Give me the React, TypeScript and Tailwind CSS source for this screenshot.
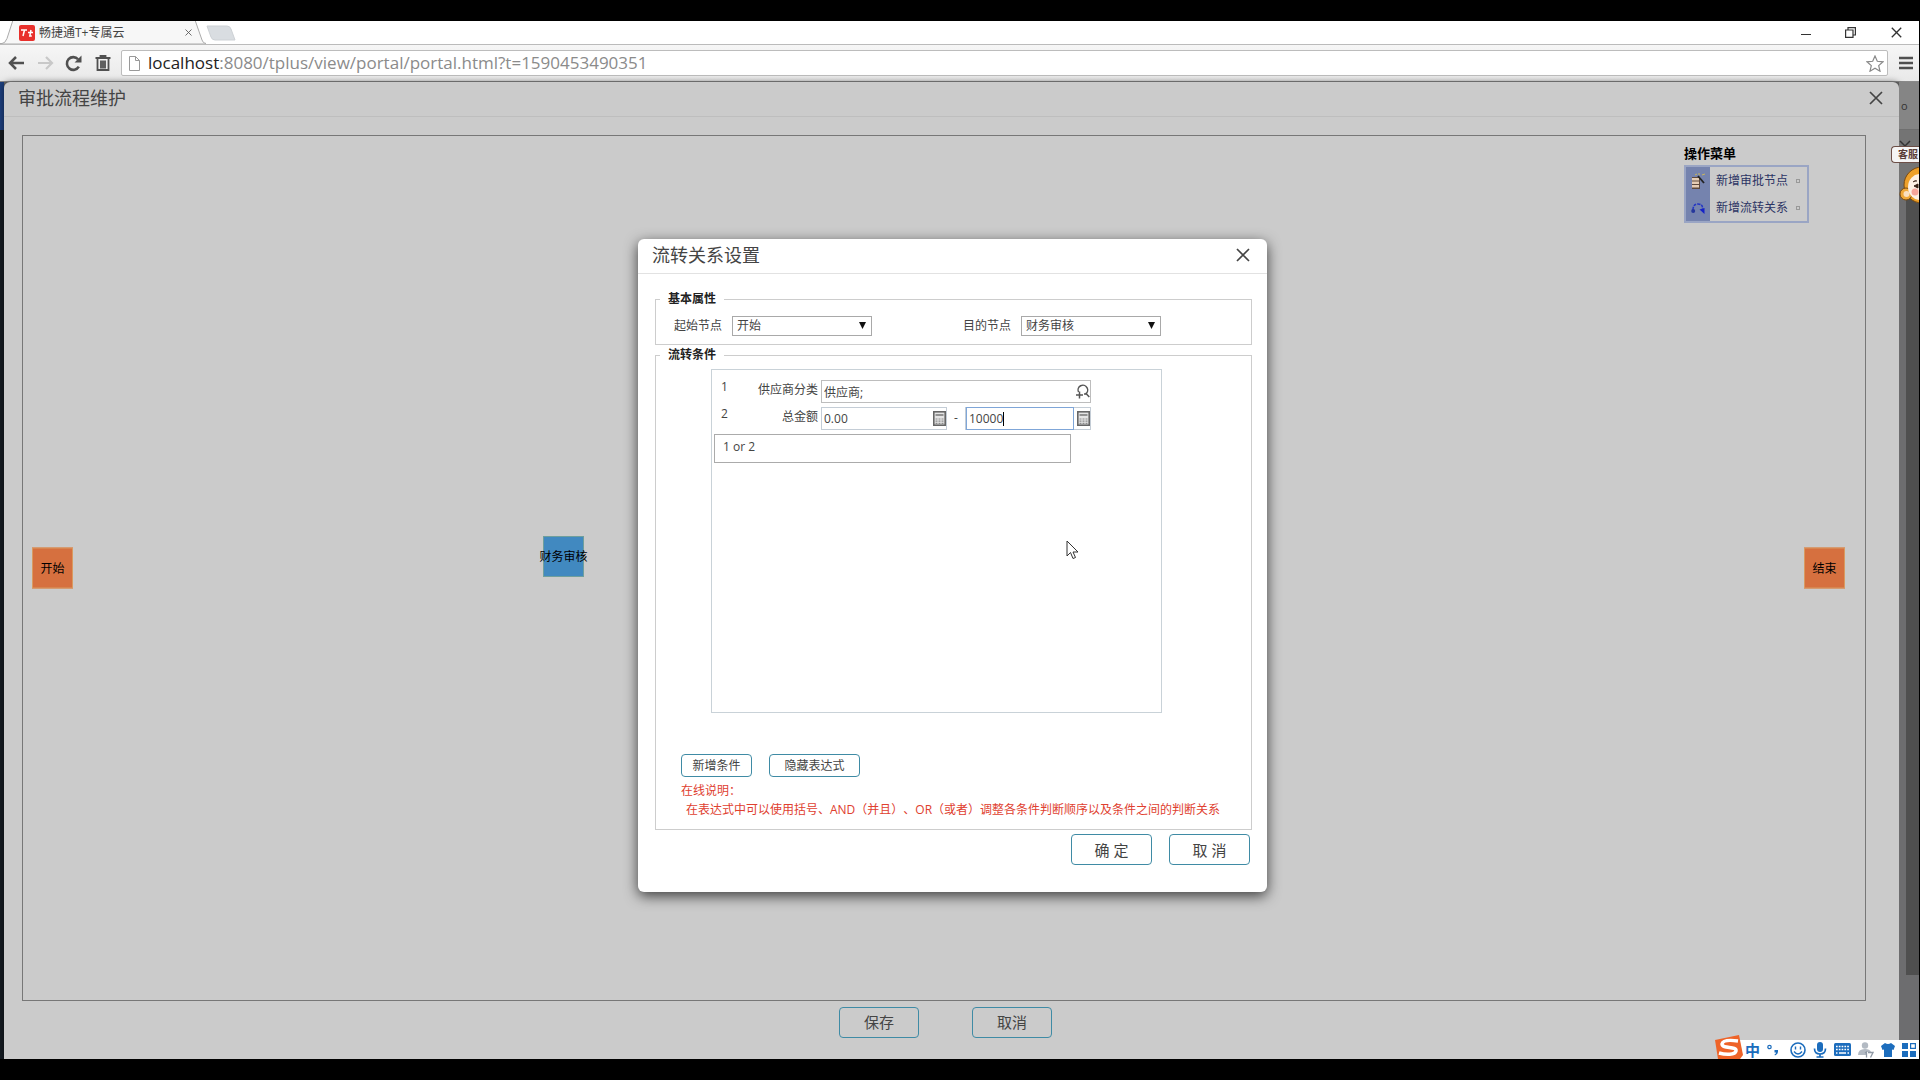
import { useState, type ReactNode } from "react";

const START_OPTIONS = ["开始", "财务审核"];
const TARGET_OPTIONS = ["财务审核", "结束"];

function CloseIcon({ className }: { className: string }) {
  return (
    <svg viewBox="0 0 14 14" className={className} fill="none" stroke="currentColor" aria-hidden="true">
      <path d="M1 1l12 12M13 1L1 13" strokeWidth="1.7" />
    </svg>
  );
}

function CalculatorIcon() {
  return (
    <svg viewBox="0 0 13 15" className="h-[15px] w-[13px]" aria-hidden="true">
      <rect x="0.8" y="0.8" width="11.4" height="13.4" fill="#e4e4e4" stroke="#666" strokeWidth="1.6" />
      <path d="M2.500 4h8" stroke="#777" strokeWidth="1.500" />
      <path d="M2.500 8h8M2.500 10.200h8M2.500 12.400h8" stroke="#8c8c8c" strokeWidth="1.200" strokeDasharray="2 1" />
    </svg>
  );
}

function LookupIcon() {
  return (
    <svg viewBox="0 0 15 15" className="size-[15px]" fill="none" stroke="#555" aria-hidden="true">
      <path d="M3.500 8A4.800 4.800 0 1 1 10.500 10" strokeWidth="1.500" />
      <path d="M4.500 7.500v7M1 11h7M9 10h2.500l2.800 3" strokeWidth="1.500" />
    </svg>
  );
}

function BrowserHeader() {
  return (
    <header className="bg-white font-['Open_Sans','Noto_Sans_CJK_SC',sans-serif]">
      <div className="flex h-[23px] items-stretch justify-between">
        <div className="flex">
          <div className="relative flex w-[206px] items-center">
            <svg viewBox="0 0 206 23" className="absolute inset-0 h-[23px] w-[206px]" aria-hidden="true">
              <path d="M0 22.5h2q3 0 5-5L13-1H195l7 20q1 3.500 4 3.500V23H0z" fill="#f7f7f7" stroke="#aaa" />
            </svg>
            <div className="relative flex w-full items-center pl-[19px]">
              <svg viewBox="0 0 16 16" className="size-4" aria-hidden="true">
                <rect width="16" height="16" rx="2" fill="#e8302c" />
                <path d="M2 5h6M5.500 5l-1.500 6M9 7.500h5M12 5l-1.200 6h2" stroke="#fff" strokeWidth="1.500" fill="none" />
              </svg>
              <span className="ml-1 grow text-xs text-[#444]">畅捷通T+专属云</span>
              <button type="button" aria-label="关闭标签页" className="mr-[14px] text-[#555]">
                <CloseIcon className="size-[7px]" />
              </button>
            </div>
          </div>
          <svg viewBox="0 0 34 23" className="h-[23px] w-[34px]" aria-hidden="true">
            <path d="M1 5h20q3 0 4 3l4 11H9q-3 0-4-3z" fill="#d9dde1" stroke="#cdd1d5" />
          </svg>
        </div>
        <div className="flex items-center gap-8 pr-[17px] text-[#333]">
          <button type="button" aria-label="最小化" className="pr-[2px]">
            <svg viewBox="0 0 10 10" className="size-[10px]">
              <path d="M0 6.500h10" stroke="currentColor" />
            </svg>
          </button>
          <button type="button" aria-label="还原">
            <svg viewBox="0 0 11 11" className="size-[11px]" fill="none" stroke="currentColor" strokeWidth="1.200">
              <path d="M0.600 3h7.400v7.400H0.600zM3 3V0.600h7.400V8H8" />
            </svg>
          </button>
          <button type="button" aria-label="关闭" className="pl-[3px]">
            <CloseIcon className="size-[11px]" />
          </button>
        </div>
      </div>
      <div className="flex h-[38px] items-center border-t border-b border-t-[#bbb] border-b-[#8a8a8a] bg-gradient-to-b from-[#f6f6f6] to-[#e9e9e9] pr-[6px] pl-2">
        <div className="flex items-center gap-[11px] text-[#505050]">
          <button type="button" aria-label="后退">
            <svg viewBox="0 0 16 14" className="h-[14px] w-4" fill="none" stroke="currentColor" strokeWidth="2.500">
              <path d="M8 1L2 7l6 6M2 7h14" />
            </svg>
          </button>
          <button type="button" aria-label="前进" className="ml-[3px] text-[#c8c8c8]">
            <svg viewBox="0 0 16 14" className="h-[14px] w-4" fill="none" stroke="currentColor" strokeWidth="2.200">
              <path d="M8 1l6 6-6 6M14 7H0" />
            </svg>
          </button>
          <button type="button" aria-label="刷新">
            <svg viewBox="0 0 16 16" className="size-[17px]">
              <path d="M13 11A6 6 0 1 1 12.300 4" fill="none" stroke="currentColor" strokeWidth="2.400" />
              <path d="M15.500 0.500V7H9z" fill="currentColor" />
            </svg>
          </button>
          <button type="button" aria-label="清除" className="ml-[2px]">
            <svg viewBox="0 0 16 16" className="size-4" fill="none" stroke="currentColor" strokeWidth="1.800">
              <path d="M0.500 3h15M5.500 3V1h5v2M2.500 4v11h11V4M6 5.500v8M8 5.500v8M10 5.500v8" />
            </svg>
          </button>
        </div>
        <div className="ml-[10px] flex h-[26px] grow items-center rounded-xs border border-[#bcbcbc] bg-white pr-[3px] pl-[7px]">
          <svg viewBox="0 0 11 15" className="h-[15px] w-[11px]" fill="none" stroke="#999" aria-hidden="true">
            <path d="M0.500 0.500h6l4 4v10h-10zM6.500 0.500v4h4" />
          </svg>
          <p className="ml-2 grow text-[17px] leading-6 text-[#8b8b8b]">
            <span className="text-[#222]">localhost</span>:8080/tplus/view/portal/portal.html?t=1590453490351
          </p>
          <button type="button" aria-label="收藏">
            <svg viewBox="0 0 18 17" className="h-[17px] w-[18px]" fill="none" stroke="#888">
              <path d="M9 1l2.300 5.300 5.700.5-4.300 3.800 1.300 5.600L9 13.200l-5 3 1.300-5.600L1 6.800l5.700-.5z" strokeWidth="1.200" />
            </svg>
          </button>
        </div>
        <button type="button" aria-label="菜单" className="ml-[11px] text-[#505050]">
          <svg viewBox="0 0 14 14" className="size-[14px]" stroke="currentColor" strokeWidth="2.600">
            <path d="M0 2h14M0 7h14M0 12h14" />
          </svg>
        </button>
      </div>
    </header>
  );
}

function FlowNode({ label, className }: { label: string; className: string }) {
  return (
    <div className={`absolute flex h-[41px] w-[41px] items-center justify-center border text-xs whitespace-nowrap text-black ${className}`}>
      {label}
    </div>
  );
}

function MenuItem({ label }: { label: string }) {
  return (
    <button type="button" className="flex h-[27px] items-center gap-2 px-[6px] text-xs text-[#2b3464]">
      {label}
      <span className="size-1 border border-[#999]" />
    </button>
  );
}

function OperationMenu() {
  return (
    <nav className="absolute top-[9px] right-14">
      <h2 className="pb-1 text-[13px] leading-4 font-bold text-black">操作菜单</h2>
      <div className="flex w-[125px] border-2 border-[#9aa5c4]">
        <div className="flex w-6 flex-col items-center bg-[#7583ae]">
          <span className="flex h-[27px] items-center">
            <svg viewBox="0 0 16 16" className="size-4" aria-hidden="true">
              <path d="M2 4h8v12H2z" fill="#5f4a3c" />
              <path d="M2 5h7v2.500H2zM2 8.500h7V11H2zM2 12h7v2.500H2z" fill="#e5cdb4" />
              <path d="M8 3l6 7" stroke="#222" strokeWidth="1.800" />
              <path d="M5 2l2-1M8 1h2M12 2l3-1" stroke="#c9b65b" />
            </svg>
          </span>
          <span className="flex h-[27px] items-center">
            <svg viewBox="0 0 14 12" className="h-3 w-[14px]" aria-hidden="true">
              <path d="M2 8Q2 2 7 2t4.500 5" fill="none" stroke="#2335c4" strokeWidth="1.500" strokeDasharray="3 1" />
              <circle cx="2.200" cy="9" r="2" fill="#26379c" />
              <path d="M8.500 7.500l5-1.500v6z" fill="#1522c8" />
            </svg>
          </span>
        </div>
        <div className="flex flex-col">
          <MenuItem label="新增审批节点" />
          <MenuItem label="新增流转关系" />
        </div>
      </div>
    </nav>
  );
}

function OutlineButton({ className, children }: { className: string; children: ReactNode }) {
  return (
    <button type="button" className={`rounded-sm border border-[#3f8ba5] whitespace-nowrap text-[#444] ${className}`}>
      {children}
    </button>
  );
}

function FlowPanel() {
  return (
    <section className="flex grow flex-col rounded-t-md bg-[#cbcbcb] shadow-[0_0_6px_rgba(0,0,0,0.5)]">
      <div className="flex h-[35px] items-center justify-between border-b border-[#bebebe] pr-4 pb-[2px] pl-[14px]">
        <h1 className="text-lg leading-6 text-[#444]">审批流程维护</h1>
        <button type="button" aria-label="关闭" className="text-[#444]">
          <CloseIcon className="size-[14px]" />
        </button>
      </div>
      <div className="relative mt-[18px] mr-[33px] ml-[18px] grow border border-[#777]">
        <FlowNode label="开始" className="top-1/2 left-[9px] -translate-y-1/2 border-[#d99a60] bg-[#d6703f]" />
        <FlowNode label="财务审核" className="top-[400px] left-[520px] border-[#6f9f9c] bg-[#4189c0]" />
        <FlowNode label="结束" className="top-1/2 right-5 -translate-y-1/2 border-[#d99a60] bg-[#d6703f]" />
        <OperationMenu />
      </div>
      <div className="flex justify-center gap-[53px] pt-[6px] pr-3 pb-[21px]">
        <OutlineButton className="h-[31px] w-20 text-[15px]">保存</OutlineButton>
        <OutlineButton className="h-[31px] w-20 text-[15px]">取消</OutlineButton>
      </div>
    </section>
  );
}

function NodeSelect({ id, label, options }: { id: string; label: string; options: string[] }) {
  return (
    <div className="flex items-center gap-[10px]">
      <label htmlFor={id}>{label}</label>
      <div className="relative">
        <select id={id} className="block h-5 w-[140px] appearance-none border border-[#a9a9a9] bg-white pl-1 leading-[18px]">
          {options.map((option) => (
            <option key={option}>{option}</option>
          ))}
        </select>
        <svg viewBox="0 0 7 7" className="pointer-events-none absolute top-[6px] right-[6px] size-[7px]" aria-hidden="true">
          <path d="M0 0h7L3.500 7z" fill="#111" />
        </svg>
      </div>
    </div>
  );
}

function RelationDialog() {
  const [supplier, setSupplier] = useState("供应商;");
  const [minAmount, setMinAmount] = useState("0.00");
  const [maxAmount, setMaxAmount] = useState("10000");
  const [expression, setExpression] = useState("1 or 2");

  return (
    <div role="dialog" aria-labelledby="relation-title" className="w-[629px] rounded-md bg-white text-xs text-[#444] shadow-[0_4px_14px_rgba(0,0,0,0.7)]">
      <div className="flex h-[35px] items-center justify-between border-b border-[#e2e2e2] pr-[17px] pb-[2px] pl-[14px]">
        <h2 id="relation-title" className="text-lg leading-6">流转关系设置</h2>
        <button type="button" aria-label="关闭">
          <CloseIcon className="size-[14px]" />
        </button>
      </div>

      <div className="pt-4 pr-[15px] pb-[27px] pl-[17px]">
        <fieldset className="border border-[#cdcdcd] pb-[8px]">
          <legend className="ml-1 px-2 leading-[18px] font-bold text-[#222]">基本属性</legend>
          <div className="flex gap-[91px] pt-2 pl-[18px]">
            <NodeSelect id="start-node" label="起始节点" options={START_OPTIONS} />
            <NodeSelect id="target-node" label="目的节点" options={TARGET_OPTIONS} />
          </div>
        </fieldset>

        <fieldset className="mt-[1px] border border-[#cdcdcd] pb-[10px]">
          <legend className="ml-1 px-2 leading-[18px] font-bold text-[#222]">流转条件</legend>
          <div className="mt-[5px] ml-[55px] h-[344px] w-[451px] border border-[#c9d2d8] pt-[10px] pl-[2px]">
            <div className="flex h-[27px]">
              <span className="w-[23px] pl-[7px] leading-[14px]">1</span>
              <label htmlFor="supplier" className="w-[81px] pt-[1px] text-right leading-[18px]">供应商分类</label>
              <div className="ml-[3px] flex h-[23px] w-[270px] items-center border border-[#bdbdbd]">
                <input id="supplier" value={supplier} onChange={(e) => setSupplier(e.target.value)} className="h-full min-w-0 grow pl-[2px] outline-none" />
                <button type="button" aria-label="选择供应商">
                  <LookupIcon />
                </button>
              </div>
            </div>
            <div className="flex h-[27px]">
              <span className="w-[23px] pl-[7px] leading-[14px]">2</span>
              <label htmlFor="min-amount" className="w-[81px] pt-[1px] text-right leading-[18px]">总金额</label>
              <div className="ml-[3px] flex h-[23px] w-[126px] items-center border border-[#c4cdd6]">
                <input id="min-amount" value={minAmount} onChange={(e) => setMinAmount(e.target.value)} className="h-full min-w-0 grow pl-[2px] outline-none" />
                <button type="button" aria-label="计算器">
                  <CalculatorIcon />
                </button>
              </div>
              <span className="w-[18px] text-center leading-[22px]">-</span>
              <div className="flex h-[23px] w-[126px] items-center border border-[#c4cdd6]">
                <div className="flex h-[23px] w-[108px] items-center border border-[#7fa6d8] pl-[2px]">
                  <input aria-label="总金额上限" value={maxAmount} onChange={(e) => setMaxAmount(e.target.value)} className="field-sizing-content outline-none" />
                  <span className="h-[14px] w-px bg-black" />
                </div>
                <button type="button" aria-label="计算器" className="ml-[3px]">
                  <CalculatorIcon />
                </button>
              </div>
            </div>
            <input
              aria-label="条件表达式"
              value={expression}
              onChange={(e) => setExpression(e.target.value)}
              className="block h-[29px] w-[357px] border border-[#ababab] pb-1 pl-2 outline-none"
            />
          </div>
          <div className="mt-[41px] flex gap-[17px] pl-[25px]">
            <OutlineButton className="h-[23px] w-[71px]">新增条件</OutlineButton>
            <OutlineButton className="h-[23px] w-[91px]">隐藏表达式</OutlineButton>
          </div>
          <div className="mt-1 pl-[25px] leading-[19px] text-[#e0402f] [text-spacing-trim:space-all]">
            <p>在线说明：</p>
            <p className="pl-[5px] whitespace-nowrap">
              在表达式中可以使用括号、AND（并且）、OR（或者）调整各条件判断顺序以及条件之间的判断关系
            </p>
          </div>
        </fieldset>

        <div className="mt-1 flex justify-end gap-[17px] pr-[2px]">
          <OutlineButton className="h-[31px] w-[81px] text-[15px]">确 定</OutlineButton>
          <OutlineButton className="h-[31px] w-[81px] text-[15px]">取 消</OutlineButton>
        </div>
      </div>
    </div>
  );
}

function ServiceBadge() {
  return (
    <div className="absolute top-[64px] right-0 flex w-[28px] flex-col items-end overflow-hidden">
      <span className="w-full rounded-l-sm border border-r-0 border-[#6d4f47] bg-[#f5f5f5] pl-[6px] text-[10px] leading-[15px] font-bold whitespace-nowrap text-[#5c4038]">
        客服
      </span>
      <svg viewBox="0 0 20 40" className="mt-1 h-10 w-5" aria-hidden="true">
        <circle cx="23" cy="18" r="18" fill="#eda02a" stroke="#7a4a10" />
        <circle cx="7" cy="27" r="6" fill="#f0a83a" stroke="#7a4a10" />
        <circle cx="7.500" cy="27" r="3" fill="#fbe0c0" />
        <ellipse cx="21" cy="20" rx="12" ry="13" fill="#fdf0e4" />
        <circle cx="16" cy="25" r="3.500" fill="#f7a59a" />
        <path d="M14 15q2-2 4-1M15 19l4-2v4z" fill="#3a2418" stroke="#3a2418" />
      </svg>
    </div>
  );
}

function ImeBar() {
  return (
    <div className="absolute right-0 bottom-0 flex h-[19px] w-[184px] items-center justify-end gap-[7px] bg-white pr-[3px] text-[#1c6dbd]">
      <svg viewBox="0 0 28 24" className="absolute bottom-0 -left-5 h-6 w-7" aria-hidden="true">
        <path d="M0 5L24 0l4 20-3 4H3z" fill="#ee6328" />
        <path d="M23 6Q8 4 7 9c0 5 15 2 14 7-1 4-10 4-17 2" fill="none" stroke="#fff" strokeWidth="3.500" />
      </svg>
      <span className="text-[15px] leading-4 font-bold">中</span>
      <svg viewBox="0 0 12 12" className="mr-1 size-3" aria-hidden="true">
        <circle cx="2.500" cy="3" r="1.700" fill="none" stroke="currentColor" strokeWidth="1.200" />
        <path d="M7.500 6h3.500q.5 4-3 5.500l-.5-1q1.500-.7 1.500-2H7.500z" fill="currentColor" />
      </svg>
      <svg viewBox="0 0 16 16" className="size-4" fill="none" stroke="currentColor" aria-hidden="true">
        <circle cx="8" cy="8" r="7" strokeWidth="1.600" />
        <path d="M5.500 4.500v3M10.500 4.500v3M4 9.500q4 5 8 0" strokeWidth="1.400" />
      </svg>
      <svg viewBox="0 0 14 16" className="h-4 w-[14px]" aria-hidden="true">
        <rect x="4" y="0" width="6" height="10" rx="3" fill="currentColor" />
        <path d="M1.500 6.500q0 5.500 5.500 5.500t5.500-5.500M7 12v3M3.500 15h7" fill="none" stroke="currentColor" strokeWidth="1.700" />
      </svg>
      <svg viewBox="0 0 17 13" className="h-[13px] w-[17px]" aria-hidden="true">
        <rect width="17" height="13" rx="1.500" fill="currentColor" />
        <path d="M2 3.500h13M2 6.500h13" stroke="#fff" strokeWidth="1.700" strokeDasharray="1.700 1.100" />
        <path d="M2 10h1.500M5 10h7M13.500 10H15" stroke="#fff" strokeWidth="1.700" />
      </svg>
      <svg viewBox="0 0 16 16" className="size-4 text-[#b3bac3]" aria-hidden="true">
        <circle cx="7" cy="3.500" r="3.200" fill="currentColor" />
        <path d="M0 13q0-6 7-6 5 0 6 3H8v3z" fill="currentColor" />
        <path d="M7 11l1.500-1v5.500M10 10.500h5l-2.500 5" fill="none" stroke="#8f99a5" strokeWidth="1.300" />
      </svg>
      <svg viewBox="0 0 14 14" className="size-[14px]" aria-hidden="true">
        <path d="M4 0q3 2 6 0l4 3-1.500 4L11 6.500V14H3V6.500L1.500 7 0 3z" fill="currentColor" />
      </svg>
      <svg viewBox="0 0 14 14" className="size-[14px]" aria-hidden="true">
        <path d="M0 0h6v6H0zM0 8h6v6H0zM8 8h6v6H8z" fill="currentColor" />
        <path d="M8.600 0.600h4.800v4.800H8.600z" fill="none" stroke="currentColor" strokeWidth="1.200" />
      </svg>
    </div>
  );
}

export default function App() {
  return (
    <div className="flex min-h-screen flex-col bg-black pt-[21px] pr-px pb-[21px] font-['Open_Sans','Noto_Sans_CJK_SC',sans-serif]">
      <BrowserHeader />
      <main className="relative flex grow bg-[#6a6a6a]">
        <div className="flex w-1 flex-col bg-[#151b22]">
          <div className="h-12 bg-[#1d3f7d]" />
        </div>
        <FlowPanel />
        <div className="flex w-5 flex-col bg-[#5c5c5c]">
          <div className="h-12 border-b border-[#6f6f6f] bg-[#858585] pt-4 pl-[2px] text-[11px] leading-4 text-[#333]">o</div>
          <div className="flex h-16 justify-start bg-[#747474] pt-[10px]">
            <svg viewBox="0 0 12 8" className="h-2 w-3" fill="none" stroke="#333" aria-hidden="true">
              <path d="M1 1l5 5 5-5" strokeWidth="1.500" />
            </svg>
          </div>
          <div className="flex grow justify-end bg-[#6d6d6f]">
            <div className="mb-[84px] w-[13px] bg-[#4f4f4f]" />
          </div>
        </div>

        <div className="absolute inset-0 flex items-start justify-center pt-[157px] pr-[14px]">
          <RelationDialog />
        </div>

        <svg viewBox="0 0 14 20" className="absolute top-[458px] left-[1066px] h-5 w-[14px]" aria-hidden="true">
          <path d="M1 1v15l3.500-3.500L7 18.500l2.500-1L7 12h5z" fill="#fff" stroke="#333" />
        </svg>
        <ServiceBadge />
        <ImeBar />
      </main>
    </div>
  );
}
